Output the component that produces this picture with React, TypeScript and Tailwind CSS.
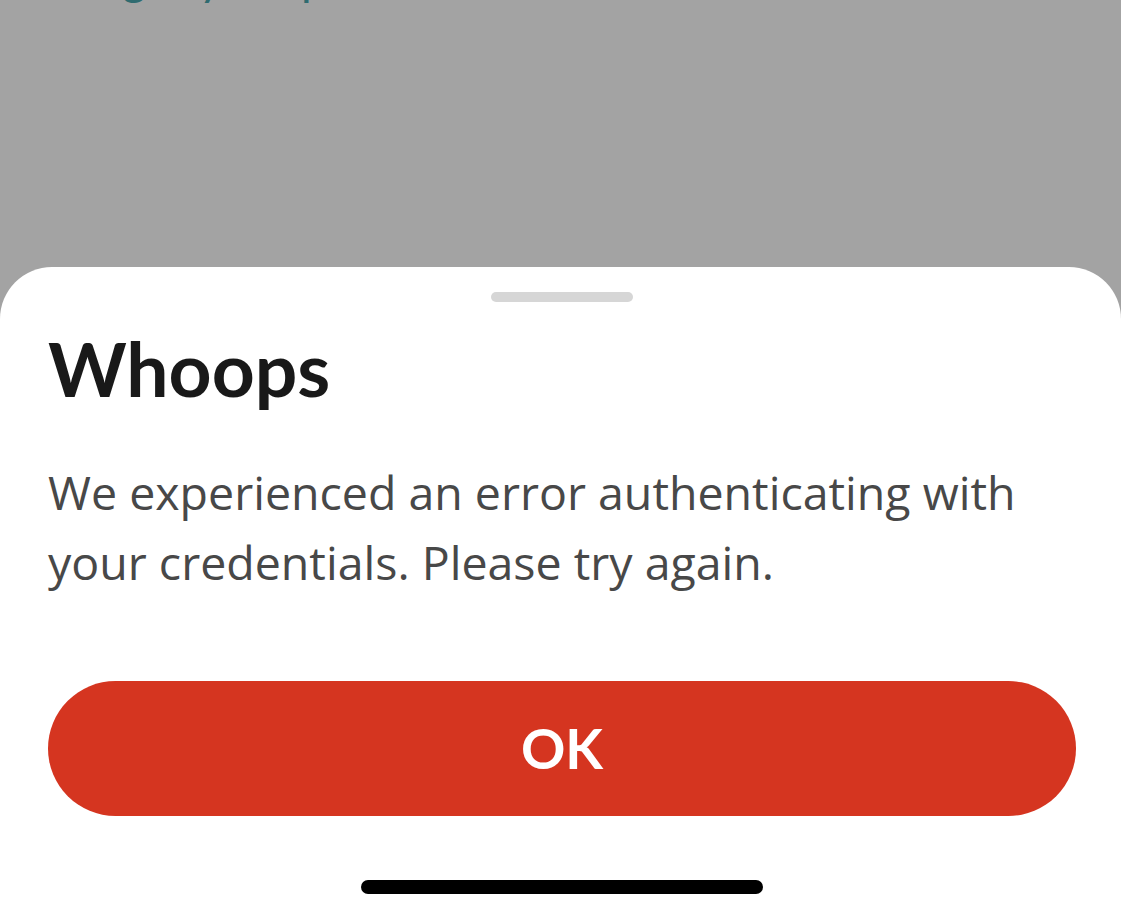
import React from 'react';

const App: React.FC = () => {
    return (
        <div className="w-[1121px] h-[917px] overflow-hidden flex flex-col bg-[#a3a3a3]" style={{ fontFamily: 'Lato, "Noto Sans", sans-serif' }}>
            {/* dimmed page behind the sheet */}
            <div className="h-[267px] flex-shrink-0 overflow-hidden">
                <p className="-mt-[48px] pl-[56px] text-[46px] leading-[52px] text-[#2f6b70]">Forgot your password?</p>
            </div>

            {/* bottom sheet */}
            <div className="flex-1 bg-white rounded-t-[52px] flex flex-col pl-[48px] pr-[45px]">
                <div className="flex justify-center pt-[25px]">
                    <div className="w-[142px] h-[10px] rounded-full bg-[#d6d6d6]" />
                </div>
                <h1 className="mt-[27px] text-[75px] leading-[78px] font-bold text-[#191919]">Whoops</h1>
                <p className="mt-[50px] text-[46.5px] leading-[70px] text-[#484848]" style={{ fontFamily: '"Open Sans", sans-serif' }}>
                    We experienced an error authenticating with your credentials. Please try again.
                </p>
                <button className="mt-[84px] h-[135px] w-full rounded-full bg-[#d53520] text-white text-[55px] font-bold">
                    OK
                </button>
                <div className="flex justify-center mt-[64px]">
                    <div className="w-[402px] h-[14px] rounded-full bg-black" />
                </div>
            </div>
        </div>
    );
};

export default App;
